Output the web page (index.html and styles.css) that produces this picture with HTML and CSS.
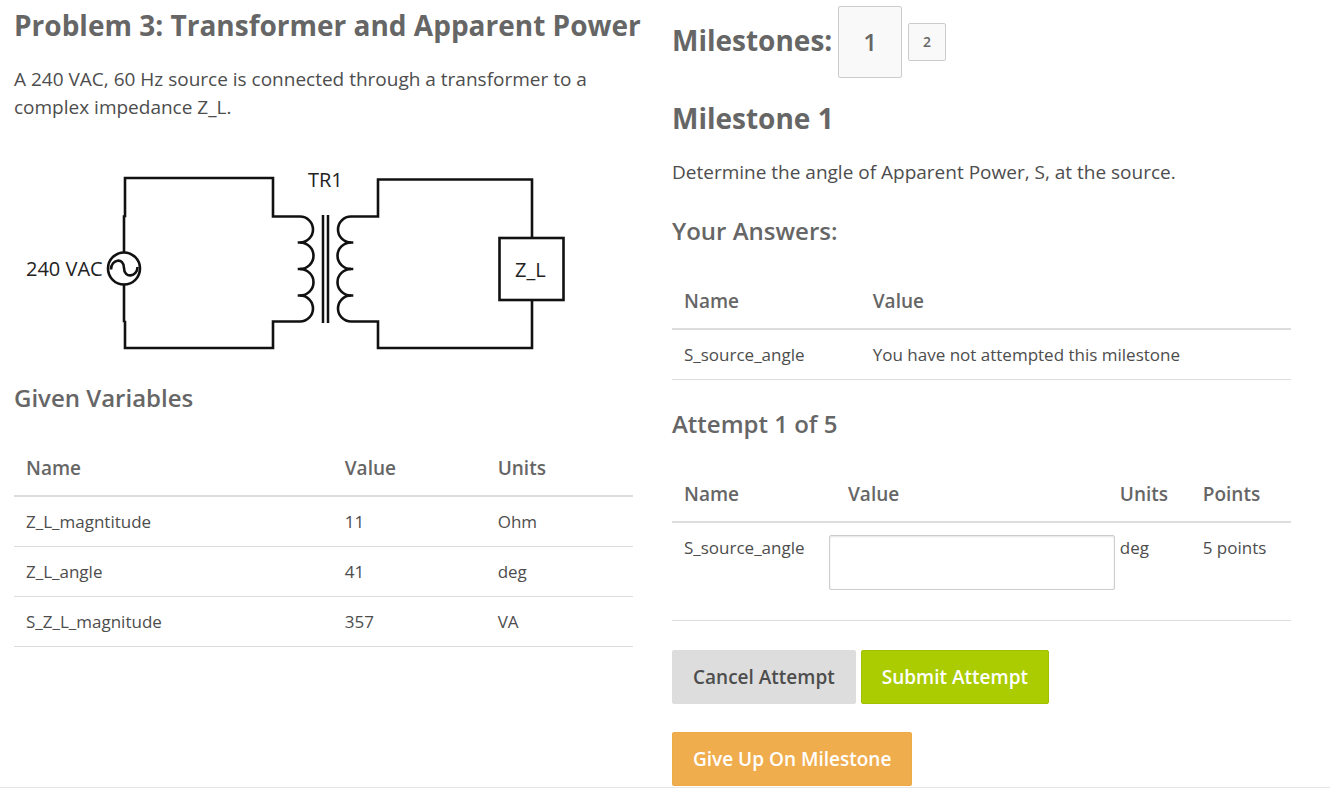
FILE: index.html
```html
<!DOCTYPE html>
<html lang="en">
<head>
<meta charset="utf-8">
<title>Problem 3: Transformer and Apparent Power</title>
<link rel="stylesheet" href="styles.css">
</head>
<body>
<main class="page">
  <section class="problem">
    <h1 class="title">Problem 3: Transformer and Apparent Power</h1>
    <p class="text">A 240 VAC, 60 Hz source is connected through a transformer to a complex impedance Z_L.</p>
    <svg class="circuit" width="565" height="200" viewBox="14 160 565 200" role="img" aria-label="Circuit diagram">
      <g fill="none" stroke="#111" stroke-width="2.600" stroke-linecap="square">
        <path d="M124 251V216.500M125 216V178H273V216.500H300a13 13 0 0 1 0 26a13.500 13.250 0 0 1 0 26.500a13.500 13.250 0 0 1 0 26.500a13 13 0 0 1 0 26H273V348H125V322M124 321V285"/>
        <path d="M299 242.500h2M299 269h2M299 295.500h2M350 242.500h2M350 269h2M350 295.500h2"/>
        <path d="M532 237V179.500H378V216.500H351a13 13 0 0 0 0 26a13.500 13.250 0 0 0 0 26.500a13.500 13.250 0 0 0 0 26.500a13 13 0 0 0 0 26H378V348H532V301"/>
        <rect x="499.500" y="238" width="64" height="62"/>
        <circle cx="124" cy="268.500" r="16"/>
        <path stroke-linecap="butt" d="M111 269.500C111 259 124 257 124 268C124 279 137.500 277 137.500 267"/>
      </g>
      <path d="M323 215V323M328 215V323" stroke="#111" stroke-width="2.500"/>
      <g class="circuit-label">
        <text x="26" y="276">240 VAC</text>
        <text x="308" y="187">TR1</text>
        <text x="515" y="277">Z_L</text>
      </g>
    </svg>
    <h2 class="subtitle">Given Variables</h2>
    <table class="table given">
      <thead><tr><th>Name</th><th>Value</th><th>Units</th></tr></thead>
      <tbody>
        <tr><td>Z_L_magntitude</td><td>11</td><td>Ohm</td></tr>
        <tr><td>Z_L_angle</td><td>41</td><td>deg</td></tr>
        <tr><td>S_Z_L_magnitude</td><td>357</td><td>VA</td></tr>
      </tbody>
    </table>
  </section>
  <section class="work">
    <div class="milestones">
      <h2 class="title">Milestones:</h2>
      <button type="button" class="step step-current">1</button>
      <button type="button" class="step">2</button>
    </div>
    <h2 class="title">Milestone 1</h2>
    <p class="text">Determine the angle of Apparent Power, S, at the source.</p>
    <h3 class="subtitle">Your Answers:</h3>
    <table class="table answers">
      <thead><tr><th>Name</th><th>Value</th></tr></thead>
      <tbody><tr><td>S_source_angle</td><td>You have not attempted this milestone</td></tr></tbody>
    </table>
    <h3 class="subtitle">Attempt 1 of 5</h3>
    <form>
      <table class="table attempt">
        <thead><tr><th>Name</th><th>Value</th><th>Units</th><th>Points</th></tr></thead>
        <tbody><tr>
          <td><label for="angle">S_source_angle</label></td>
          <td><input class="answer" id="angle" type="text"></td>
          <td>deg</td><td>5 points</td>
        </tr></tbody>
      </table>
      <div class="actions">
        <button type="button" class="btn btn-cancel">Cancel Attempt</button>
        <button type="submit" class="btn btn-submit">Submit Attempt</button>
      </div>
      <button type="button" class="btn btn-giveup">Give Up On Milestone</button>
    </form>
  </section>
</main>
</body>
</html>
```
FILE: styles.css
```css
* { box-sizing: border-box; }
body {
  margin: 0;
  background: #fff;
  color: #4d4d4d;
  font: 19px/28px "Open Sans", sans-serif;
}
.page {
  display: grid;
  grid-template-columns: minmax(0, 1fr) minmax(0, 1fr);
  column-gap: 39px;
  padding: 6px 39px 1px 14px;
  border-bottom: 1px solid #e5e5e5;
}
.title, .subtitle { margin: 0; color: #666; white-space: nowrap; }
.title { font-size: 28px; line-height: 38px; font-weight: 700; }
.subtitle { font-size: 24px; line-height: 32px; font-weight: 600; }
.text { margin: 21px 0 0; }
.circuit { display: block; margin-top: 39px; max-width: 100%; }
.circuit-label {
  fill: #222;
  font: 20px "Open Sans", sans-serif;
}
.problem .subtitle { margin-top: 22px; }
.table {
  width: 100%;
  margin-top: 28px;
  border-collapse: separate;
  border-spacing: 0;
  table-layout: fixed;
}
.table th, .table td {
  padding: 12px;
  text-align: left;
  vertical-align: top;
  white-space: nowrap;
}
.table th {
  padding-bottom: 13px;
  color: #666;
  font-size: 19px;
  line-height: 28px;
  font-weight: 600;
  border-bottom: 2px solid #ddd;
}
.table td {
  font-size: 17px;
  line-height: 25px;
  border-bottom: 1px solid #ddd;
}
.given th:nth-child(1) { width: 51.5%; }
.given th:nth-child(2) { width: 24.7%; }
.answers th:nth-child(1) { width: 30.5%; }
.attempt th:nth-child(1) { width: 26.5%; }
.attempt th:nth-child(3) { width: 13.4%; }
.attempt th:nth-child(4) { width: 16.2%; }
.milestones { display: flex; align-items: center; gap: 6px; margin-bottom: 21px; }
.milestones .title { padding-bottom: 5px; }
.step {
  padding: 8px 14px;
  border: 1px solid #ccc;
  border-radius: 2px;
  background: #f9f9f9;
  color: #666;
  font: 600 14px/20px "Open Sans", sans-serif;
}
.step-current { padding: 18px 24px; font-size: 24px; line-height: 34px; }
.work .subtitle { margin-top: 29px; }
.work .answers + .subtitle { margin-top: 28px; }
.answer {
  display: block;
  width: calc(100% + 38px);
  height: 55px;
  margin: 0 -19px 18px;
  padding: 12px;
  border: 1px solid #ccc;
  border-radius: 2px;
  box-shadow: inset 0 1px 2px rgba(0, 0, 0, .1);
  color: inherit;
  font: inherit;
}
.actions { display: flex; flex-wrap: wrap; gap: 5px; margin: 29px 0 28px; }
.btn {
  display: block;
  padding: 12px 20px;
  border: 1px solid transparent;
  border-radius: 2px;
  color: #fff;
  font: 600 19px/28px "Open Sans", sans-serif;
}
.btn-cancel { background: #ddd; border-color: #ddd; color: #4d4d4d; }
.btn-submit { background: #aacc00; border-color: #a0c000; }
.btn-giveup { background: #f0ad4e; border-color: #efa945; }
```
